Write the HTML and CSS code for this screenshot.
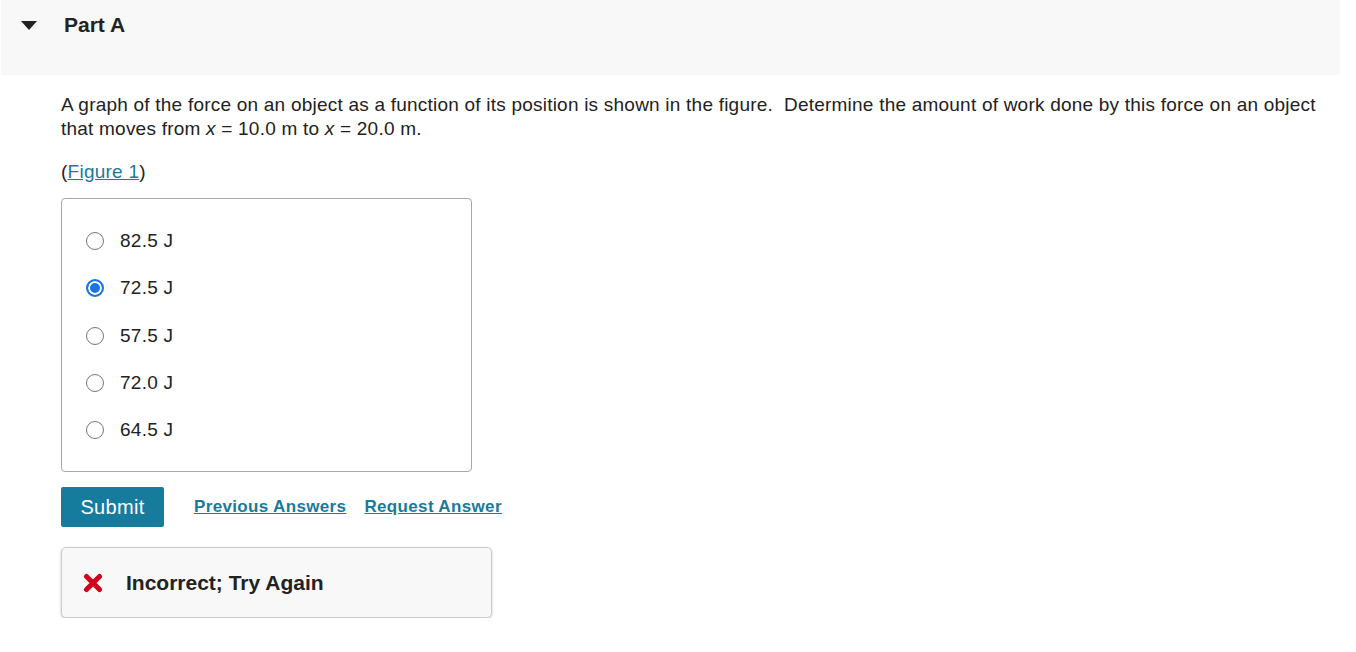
FILE: index.html
```html
<!DOCTYPE html>
<html>
<head>
<meta charset="utf-8">
<link rel="stylesheet" href="styles.css">
</head>
<body>
<div class="part-header">
  <span class="caret"></span>
  <h2 class="part-title">Part A</h2>
</div>
<div class="content">
  <p class="question">A graph of the force on an object as a function of its position is shown in the figure.&nbsp; Determine the amount of work done by this force on an object that moves from <i>x</i> = 10.0 m to <i>x</i> = 20.0 m.</p>
  <p class="figure-ref">(<a href="#" class="link">Figure 1</a>)</p>
  <div class="options">
    <label class="option"><span class="radio"></span><span>82.5 J</span></label>
    <label class="option"><span class="radio checked"></span><span>72.5 J</span></label>
    <label class="option"><span class="radio"></span><span>57.5 J</span></label>
    <label class="option"><span class="radio"></span><span>72.0 J</span></label>
    <label class="option"><span class="radio"></span><span>64.5 J</span></label>
  </div>
  <div class="actions">
    <button class="submit">Submit</button>
    <a href="#" class="action-link">Previous Answers</a>
    <a href="#" class="action-link">Request Answer</a>
  </div>
  <div class="feedback">
    <svg class="x-icon" width="20" height="20" viewBox="0 0 20 20"><path d="M3.5 3.5 L16.5 16.5 M16.5 3.5 L3.5 16.5" stroke="#d0021b" stroke-width="5" stroke-linecap="round"/></svg>
    <span class="feedback-text">Incorrect; Try Again</span>
  </div>
</div>
</body>
</html>
```

FILE: styles.css
```css
html, body {
  margin: 0;
  padding: 0;
  background: #fff;
  font-family: "Liberation Sans", Arial, sans-serif;
  color: #222;
}
.part-header {
  margin-left: 1px;
  width: 1339px;
  height: 75px;
  background: #f8f8f8;
  display: flex;
  align-items: flex-start;
  box-sizing: border-box;
  padding-top: 13px;
}
.caret {
  width: 0;
  height: 0;
  border-left: 8px solid transparent;
  border-right: 8px solid transparent;
  border-top: 9px solid #222;
  margin-left: 20px;
  margin-top: 8px;
}
.part-title {
  margin: 0 0 0 27px;
  font-size: 21px;
  font-weight: bold;
  line-height: 24px;
  color: #222;
}
.content {
  padding: 18px 0 0 61px;
  width: 1275px;
}
.question {
  margin: 0;
  font-size: 19px;
  letter-spacing: 0.22px;
  line-height: 24px;
  color: #222;
}
.question i {
  font-style: italic;
}
.figure-ref {
  margin: 19px 0 0;
  font-size: 19px;
  letter-spacing: 0.25px;
  line-height: 24px;
}
.link {
  color: #1b7a9c;
  text-decoration: underline;
}
.options {
  margin-top: 14px;
  width: 411px;
  height: 274px;
  box-sizing: border-box;
  border: 1px solid #a8a8a8;
  border-radius: 4px;
  padding: 30px 0 0 24px;
  display: flex;
  flex-direction: column;
  gap: 23.3px;
}
.option {
  display: flex;
  align-items: center;
  font-size: 19px;
  letter-spacing: 0.25px;
  line-height: 24px;
  color: #222;
}
.radio {
  width: 18px;
  height: 18px;
  border: 1px solid #777;
  border-radius: 50%;
  box-sizing: border-box;
  margin-right: 16px;
  background: #fff;
}
.radio.checked {
  border: 2px solid #1a73e8;
  box-shadow: inset 0 0 0 2px #fff;
  background: #1a73e8;
}
.actions {
  margin-top: 15px;
  display: flex;
  align-items: center;
}
.submit {
  width: 103px;
  height: 40px;
  background: #157c9e;
  color: #fff;
  border: none;
  border-radius: 2px;
  font-family: "Liberation Sans", Arial, sans-serif;
  font-size: 20px;
  letter-spacing: 0.3px;
  padding: 0;
  margin-right: 30px;
}
.action-link {
  color: #1b7a9c;
  font-weight: bold;
  font-size: 17px;
  letter-spacing: 0.35px;
  text-decoration: underline;
  margin-right: 18px;
}
.feedback {
  margin-top: 20px;
  width: 431px;
  height: 71px;
  box-sizing: border-box;
  background: #f8f8f8;
  border: 1px solid #ccc;
  border-radius: 5px;
  box-shadow: 0 1px 3px rgba(0,0,0,0.2);
  display: flex;
  align-items: center;
  padding-left: 21px;
}
.x-icon {
  margin-right: 23px;
}
.feedback-text {
  font-size: 21px;
  font-weight: bold;
  color: #222;
}
```
